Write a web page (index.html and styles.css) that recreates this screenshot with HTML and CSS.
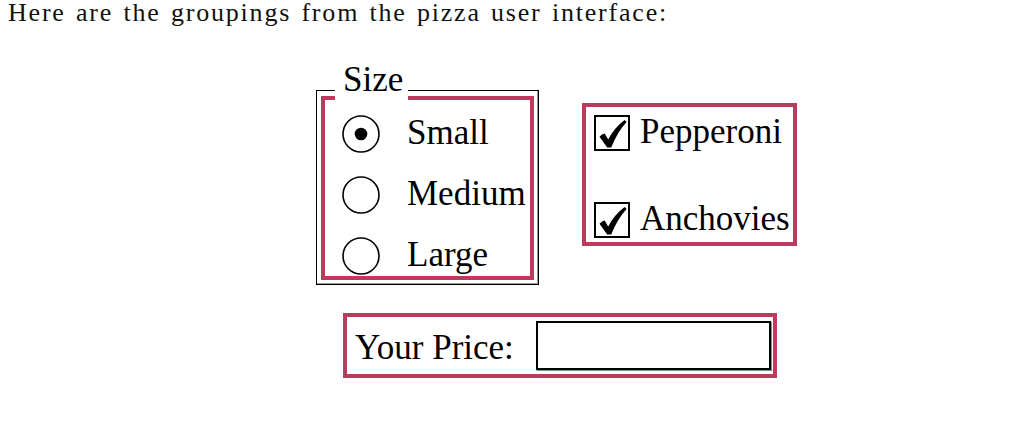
FILE: index.html
```html
<!DOCTYPE html>
<html lang="en">
<head>
<meta charset="utf-8">
<title>Pizza groupings</title>
<link rel="stylesheet" href="styles.css">
</head>
<body>
<p class="intro">Here are the groupings from the pizza user interface:</p>
<div class="figure">
  <div class="top-row">
    <div class="size-group">
      <span class="legend">Size</span>
      <div class="group radios">
        <div class="choice">
          <svg class="radio" viewBox="0 0 38 38" width="38" height="38"><circle cx="19" cy="19" r="18" fill="#fff" stroke="#000" stroke-width="1.6"/><circle cx="19" cy="19" r="6.3" fill="#000"/></svg>
          <span class="label">Small</span>
        </div>
        <div class="choice">
          <svg class="radio" viewBox="0 0 38 38" width="38" height="38"><circle cx="19" cy="19" r="18" fill="#fff" stroke="#000" stroke-width="1.6"/></svg>
          <span class="label">Medium</span>
        </div>
        <div class="choice">
          <svg class="radio" viewBox="0 0 38 38" width="38" height="38"><circle cx="19" cy="19" r="18" fill="#fff" stroke="#000" stroke-width="1.6"/></svg>
          <span class="label">Large</span>
        </div>
      </div>
    </div>
    <div class="group checks">
      <div class="check-row">
        <span class="checkbox"><svg viewBox="0 0 32 32" width="32" height="32"><path d="M3.5 19.8 Q6 17.2 8.6 16.6 L12.2 22.4 Q18.5 10.5 28.6 3 L30.6 4.9 Q21.5 14.5 15.2 30.6 L11.2 30.6 Z" fill="#000"/></svg></span>
        <span class="label">Pepperoni</span>
      </div>
      <div class="check-row">
        <span class="checkbox"><svg viewBox="0 0 32 32" width="32" height="32"><path d="M3.5 19.8 Q6 17.2 8.6 16.6 L12.2 22.4 Q18.5 10.5 28.6 3 L30.6 4.9 Q21.5 14.5 15.2 30.6 L11.2 30.6 Z" fill="#000"/></svg></span>
        <span class="label">Anchovies</span>
      </div>
    </div>
  </div>
  <div class="group price">
    <span class="label price-label">Your Price:</span>
    <span class="price-field"></span>
  </div>
</div>
</body>
</html>
```
FILE: styles.css
```css
html, body {
  margin: 0;
  padding: 0;
  background: #fff;
}

body {
  color: #000;
  font-family: "Liberation Serif", "Times New Roman", serif;
  overflow: hidden;
}

.intro {
  margin: 0 0 0 8px;
  font-size: 26px;
  line-height: 26px;
  letter-spacing: 1.8px;
  word-spacing: 2px;
  color: #111;
}

.figure {
  margin-left: 316px;
  padding-top: 64px;
  display: flex;
  flex-direction: column;
  align-items: flex-start;
}

.top-row {
  display: flex;
  align-items: flex-start;
  gap: 43px;
}

.group {
  border: 4px solid #bc3a5b;
  background: #fff;
}

.size-group {
  position: relative;
  border: 1px solid #000;
  box-shadow: inset -1px -1px 0 #9a9a9a;
  padding: 5px 4px 4px 4px;
}

.legend {
  position: absolute;
  left: 18px;
  top: -31px;
  padding: 0 5px 0 8px;
  background: #fff;
  font-size: 35px;
  line-height: 40px;
}

.radios {
  width: 188px;
  height: 162px;
  padding: 14px 0 0 17px;
  box-sizing: content-box;
  display: flex;
  flex-direction: column;
  gap: 21px;
}

.choice {
  display: flex;
  align-items: center;
  gap: 27px;
  height: 40px;
}

.radio {
  display: block;
  flex: none;
}

.label {
  font-size: 35px;
  line-height: 40px;
  white-space: nowrap;
  position: relative;
  top: -1px;
}

.checks {
  margin-top: 13px;
  box-sizing: border-box;
  width: 215px;
  height: 143px;
  display: flex;
  flex-direction: column;
  padding: 8px 0 0 8px;
  gap: 52px;
}

.check-row {
  display: flex;
  align-items: center;
  gap: 10px;
  height: 35px;
}

.checkbox {
  flex: none;
  width: 32px;
  height: 32px;
  border: 2px solid #000;
  display: flex;
  align-items: center;
  justify-content: center;
  background: #fff;
}

.checkbox svg {
  display: block;
}

.price {
  margin-top: 28px;
  margin-left: 27px;
  display: flex;
  align-items: center;
  padding: 4px 2px 4px 8px;
}

.price-label {
  top: 2px;
}

.price-field {
  margin-left: 22px;
  width: 231px;
  height: 45px;
  border: 2px solid #000;
  box-shadow: 1px 1px 0 #888;
  background: #fff;
  display: block;
}
```
